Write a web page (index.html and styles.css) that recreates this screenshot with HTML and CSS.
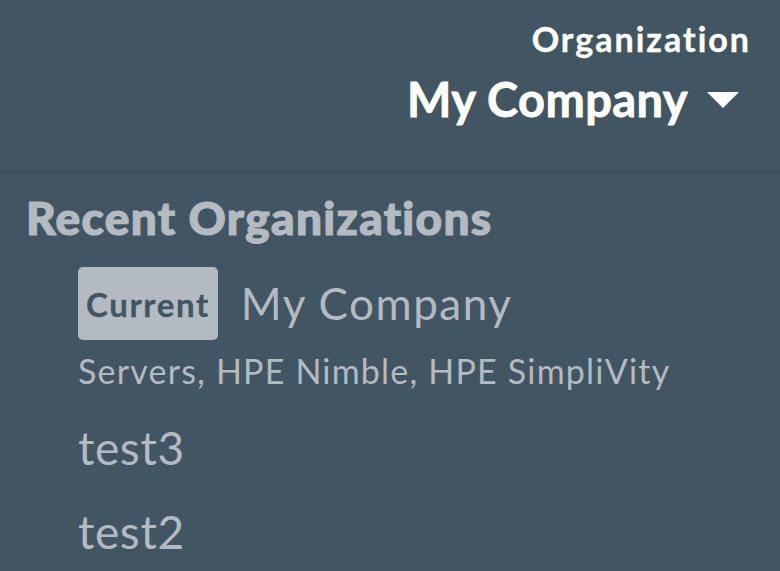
FILE: index.html
```html
<!DOCTYPE html>
<html lang="en">
<head>
<meta charset="utf-8">
<title>Organization</title>
<link rel="stylesheet" href="styles.css">
</head>
<body>
<header class="org-header">
  <div class="org-label">Organization</div>
  <button class="org-select" type="button">
    <span class="org-select-name">My Company</span>
    <svg class="caret" width="32" height="16" viewBox="0 0 32 16" aria-hidden="true"><path d="M0 0 H32 L16 16 Z" fill="#ffffff"/></svg>
  </button>
</header>
<section class="recent">
  <h2 class="recent-title">Recent Organizations</h2>
  <ul class="org-list">
    <li class="org-item">
      <div class="org-line">
        <span class="badge">Current</span>
        <span class="org-name">My Company</span>
      </div>
      <div class="org-services">Servers, HPE Nimble, HPE SimpliVity</div>
    </li>
    <li class="org-item"><span class="org-name-plain">test3</span></li>
    <li class="org-item"><span class="org-name-plain">test2</span></li>
  </ul>
</section>
</body>
</html>
```
FILE: styles.css
```css
html, body {
  margin: 0;
  padding: 0;
}
body {
  background: #425563;
  font-family: "Lato", "Open Sans", sans-serif;
  color: #b3bac1;
  width: 780px;
  height: 571px;
  overflow: hidden;
}
.org-header {
  display: flex;
  flex-direction: column;
  align-items: flex-end;
  padding: 19px 29px 0 0;
  box-sizing: border-box;
  height: 172px;
  border-bottom: 1px solid #3b4c59;
}
.org-label {
  color: #ffffff;
  font-weight: 700;
  font-size: 34px;
  line-height: 40px;
  letter-spacing: 2px;
  -webkit-text-stroke: 0.4px #ffffff;
}
.org-select {
  display: flex;
  align-items: center;
  gap: 19px;
  margin-top: 12px;
  margin-right: 12px;
  padding: 0;
  border: 0;
  background: none;
  color: #ffffff;
  font-family: inherit;
  font-weight: 700;
  font-size: 47px;
  line-height: 56px;
  letter-spacing: 0.4px;
  -webkit-text-stroke: 0.8px #ffffff;
  cursor: pointer;
}
.caret {
  display: block;
  margin-top: 2px;
}
.recent {
  padding: 18px 0 0 26px;
}
.recent-title {
  margin: 0;
  font-weight: 900;
  font-size: 46px;
  line-height: 55px;
  letter-spacing: 1.3px;
  color: #b3bac1;
  -webkit-text-stroke: 1.2px #b3bac1;
}
.org-list {
  list-style: none;
  margin: 22px 0 0 52px;
  padding: 0;
  display: flex;
  flex-direction: column;
  gap: 29px;
}
.org-line {
  display: flex;
  align-items: center;
  gap: 23px;
}
.badge {
  display: block;
  background: #b3bac1;
  color: #425563;
  font-weight: 700;
  font-size: 33px;
  line-height: 40px;
  letter-spacing: 1.6px;
  padding: 17px 8px 16px 8px;
  border-radius: 5px;
  -webkit-text-stroke: 0.3px #425563;
}
.org-name {
  font-size: 44px;
  line-height: 53px;
  letter-spacing: 1.5px;
}
.org-services {
  margin-top: 10px;
  font-size: 34px;
  line-height: 41px;
  letter-spacing: 1.2px;
}
.org-name-plain {
  display: block;
  font-size: 46px;
  line-height: 55px;
  letter-spacing: 0.6px;
}
```
